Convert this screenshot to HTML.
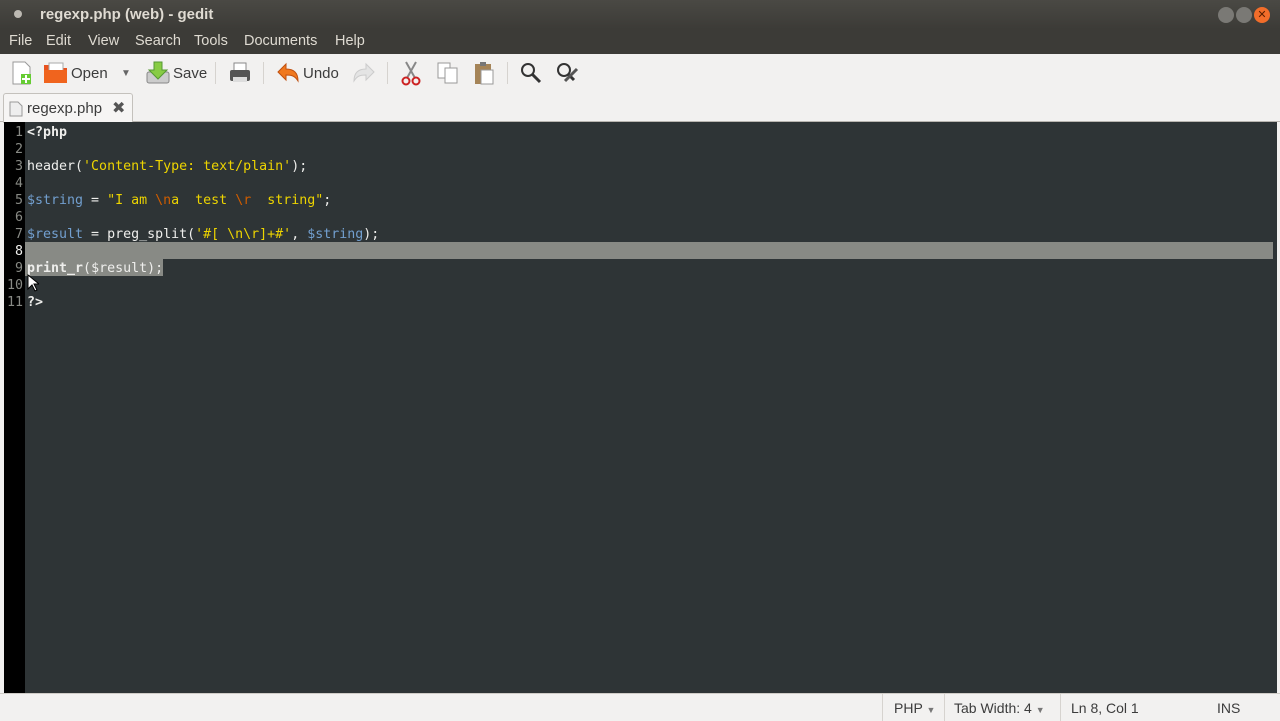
<!DOCTYPE html>
<html><head><meta charset="utf-8"><style>
*{margin:0;padding:0;box-sizing:border-box}
body{width:1280px;height:720px;overflow:hidden;background:#f2f1f0;font-family:"Liberation Sans","DejaVu Sans",sans-serif;position:relative}
.abs{position:absolute}
#title{left:0;top:0;width:1280px;height:29px;background:linear-gradient(#4a4944,#3c3b37);color:#dfdbd2;font-weight:bold;font-size:15px;line-height:29px}
#menu{left:0;top:29px;width:1280px;height:25px;background:#3c3b37;color:#dfdbd2;font-size:14.5px;line-height:25px}
#menu span{position:absolute}
#tb{left:0;top:54px;width:1280px;height:38px;background:#f2f1f0;font-size:15px;color:#3c3c3c}
#tb span{position:absolute;top:11px}
.ic{position:absolute}
.sep{position:absolute;top:8px;width:1px;height:22px;background:#d6d3cf}
#tabs{left:0;top:92px;width:1280px;height:30px;background:#f2f1f0;border-bottom:1px solid #b8b5b0}
#tab{left:3px;top:93px;width:130px;height:30px;background:#f6f5f4;border:1px solid #c4c1bc;border-bottom:none;border-radius:3px 3px 0 0}
#ed{left:4px;top:122px;width:1273px;height:571px;background:#2e3436}
#gut{left:4px;top:122px;width:21px;height:571px;background:#000}
.code{font-family:"DejaVu Sans Mono","Liberation Mono",monospace;font-size:13.3px;line-height:17px;white-space:pre}
#nums{left:4px;top:124px;width:19px;text-align:right;color:#888a85}
#src{left:27px;top:124px;color:#eeeeec}
.k{color:#eeeeec;font-weight:bold}.s{color:#edd400}.v{color:#729fcf}.e{color:#ce5c00}
#status{left:0;top:693px;width:1280px;height:27px;background:#f2f1f0;border-top:1px solid #cfccc7;font-size:14px;color:#3c3c3c}
#status span{position:absolute;top:6px}
</style></head><body>
<div id="title" class="abs"><span style="position:absolute;left:14px;top:10px;width:8px;height:8px;border-radius:50%;background:#bcb9b2"></span><span style="position:absolute;left:40px">regexp.php (web) - gedit</span>
<span style="position:absolute;left:1218px;top:7px;width:16px;height:16px;border-radius:50%;background:#7a7975"></span>
<span style="position:absolute;left:1236px;top:7px;width:16px;height:16px;border-radius:50%;background:#7a7975"></span>
<span style="position:absolute;left:1254px;top:7px;width:16px;height:16px;border-radius:50%;background:#f26d2a;color:#5a2000;font-size:11px;line-height:16px;text-align:center">✕</span></div>
<div id="menu" class="abs"><span style="left:9px">File</span><span style="left:46px">Edit</span><span style="left:88px">View</span><span style="left:135px">Search</span><span style="left:194px">Tools</span><span style="left:244px">Documents</span><span style="left:335px">Help</span></div>
<div id="tb" class="abs">
<svg class="ic" style="left:10px;top:6px" width="24" height="26"><path d="M3 2h12l5 5v17H3z" fill="#fff" stroke="#999"/><rect x="11" y="14" width="10" height="10" fill="#6c3"/><path d="M16 15v8M12 19h8" stroke="#fff" stroke-width="2"/></svg>
<svg class="ic" style="left:43px;top:7px" width="26" height="24"><path d="M1 4h8l2 3h13v15H1z" fill="#e8521e"/><rect x="6" y="2" width="14" height="12" fill="#fff" stroke="#aaa"/><path d="M1 9h23v13H1z" fill="#f0641e"/></svg>
<span style="left:71px">Open</span><span style="left:121px;top:14px;font-size:10px;color:#666">▼</span>
<svg class="ic" style="left:145px;top:6px" width="26" height="26"><rect x="2" y="12" width="22" height="11" rx="2" fill="#ccc" stroke="#888"/><path d="M9 2h8v8h5l-9 9-9-9h5z" fill="#8c4" stroke="#593"/></svg>
<span style="left:173px">Save</span>
<div class="sep" style="left:215px"></div>
<svg class="ic" style="left:228px;top:7px" width="24" height="24"><rect x="6" y="2" width="12" height="8" fill="#fff" stroke="#888"/><rect x="2" y="9" width="20" height="11" rx="2" fill="#555"/><rect x="5" y="16" width="14" height="5" fill="#ddd"/></svg>
<div class="sep" style="left:263px"></div>
<svg class="ic" style="left:276px;top:8px" width="24" height="22"><path d="M2 10l8-8v5c8 0 12 4 12 12-3-5-6-6-12-6v5z" fill="#f0781e" stroke="#c05010"/></svg>
<span style="left:303px">Undo</span>
<svg class="ic" style="left:352px;top:8px" width="24" height="22"><path d="M22 10l-8-8v5c-8 0-12 4-12 12 3-5 6-6 12-6v5z" fill="#e4e4e4" stroke="#ccc"/></svg>
<div class="sep" style="left:387px"></div>
<svg class="ic" style="left:400px;top:6px" width="22" height="26"><path d="M6 2l9 16M16 2L7 18" stroke="#888" stroke-width="2"/><circle cx="6" cy="21" r="3.5" fill="none" stroke="#c22" stroke-width="2"/><circle cx="16" cy="21" r="3.5" fill="none" stroke="#c22" stroke-width="2"/></svg>
<svg class="ic" style="left:436px;top:7px" width="24" height="24"><rect x="2" y="2" width="12" height="15" fill="#fff" stroke="#999"/><rect x="9" y="7" width="12" height="15" fill="#fff" stroke="#999"/></svg>
<svg class="ic" style="left:472px;top:6px" width="24" height="26"><rect x="3" y="4" width="16" height="20" fill="#a58457"/><rect x="8" y="2" width="6" height="4" fill="#777"/><rect x="9" y="10" width="12" height="14" fill="#fff" stroke="#999"/></svg>
<div class="sep" style="left:507px"></div>
<svg class="ic" style="left:519px;top:7px" width="24" height="24"><circle cx="9" cy="9" r="6" fill="none" stroke="#333" stroke-width="2"/><path d="M13 13l8 8" stroke="#333" stroke-width="3"/></svg>
<svg class="ic" style="left:555px;top:7px" width="26" height="24"><circle cx="9" cy="9" r="6" fill="none" stroke="#333" stroke-width="2"/><path d="M13 13l6 6" stroke="#333" stroke-width="3"/><path d="M10 20l12-12" stroke="#555" stroke-width="3"/></svg>
</div>
<div id="tabs" class="abs"></div>
<div id="tab" class="abs"><svg style="position:absolute;left:5px;top:7px" width="14" height="16"><path d="M1 1h8l4 4v10H1z" fill="#eee" stroke="#999"/></svg><span style="position:absolute;left:23px;top:6px;font-size:15px;color:#3c3c3c">regexp.php</span><span style="position:absolute;left:108px;top:4px;font-size:16px;color:#555;font-weight:bold">✖</span></div>
<div id="ed" class="abs"></div>
<div id="gut" class="abs"></div>
<div class="abs" style="left:25px;top:242px;width:1248px;height:17px;background:#888a85"></div>
<div class="abs" style="left:25px;top:259px;width:138px;height:17px;background:#888a85"></div>
<div id="nums" class="abs code">1
2
3
4
5
6
7
<span style="color:#eeeeec">8</span>
9
10
11</div>
<div id="src" class="abs code"><span class="k">&lt;?php</span>

header(<span class="s">'Content-Type: text/plain'</span>);

<span class="v">$string</span> = <span class="s">"I am <span class="e">\n</span>a  test <span class="e">\r</span>  string"</span>;

<span class="v">$result</span> = preg_split(<span class="s">'#[ \n\r]+#'</span>, <span class="v">$string</span>);

<span class="k">print_r</span>(<span style="color:#eeeeec">$result</span>);

<span class="k">?&gt;</span></div>
<svg class="abs" style="left:27px;top:274px" width="12" height="18"><path d="M1 1v14l4-4 3 6 2-1-3-6h5z" fill="#fff" stroke="#000"/></svg>
<div id="status" class="abs">
<div style="position:absolute;left:882px;top:0;width:1px;height:27px;background:#d6d3cf"></div>
<span style="left:894px">PHP <small style="font-size:9px;color:#777">▼</small></span>
<div style="position:absolute;left:944px;top:0;width:1px;height:27px;background:#d6d3cf"></div>
<span style="left:954px">Tab Width: 4 <small style="font-size:9px;color:#777">▼</small></span>
<div style="position:absolute;left:1060px;top:0;width:1px;height:27px;background:#d6d3cf"></div>
<span style="left:1071px">Ln 8, Col 1</span>
<span style="left:1217px">INS</span>
</div>
</body></html>
